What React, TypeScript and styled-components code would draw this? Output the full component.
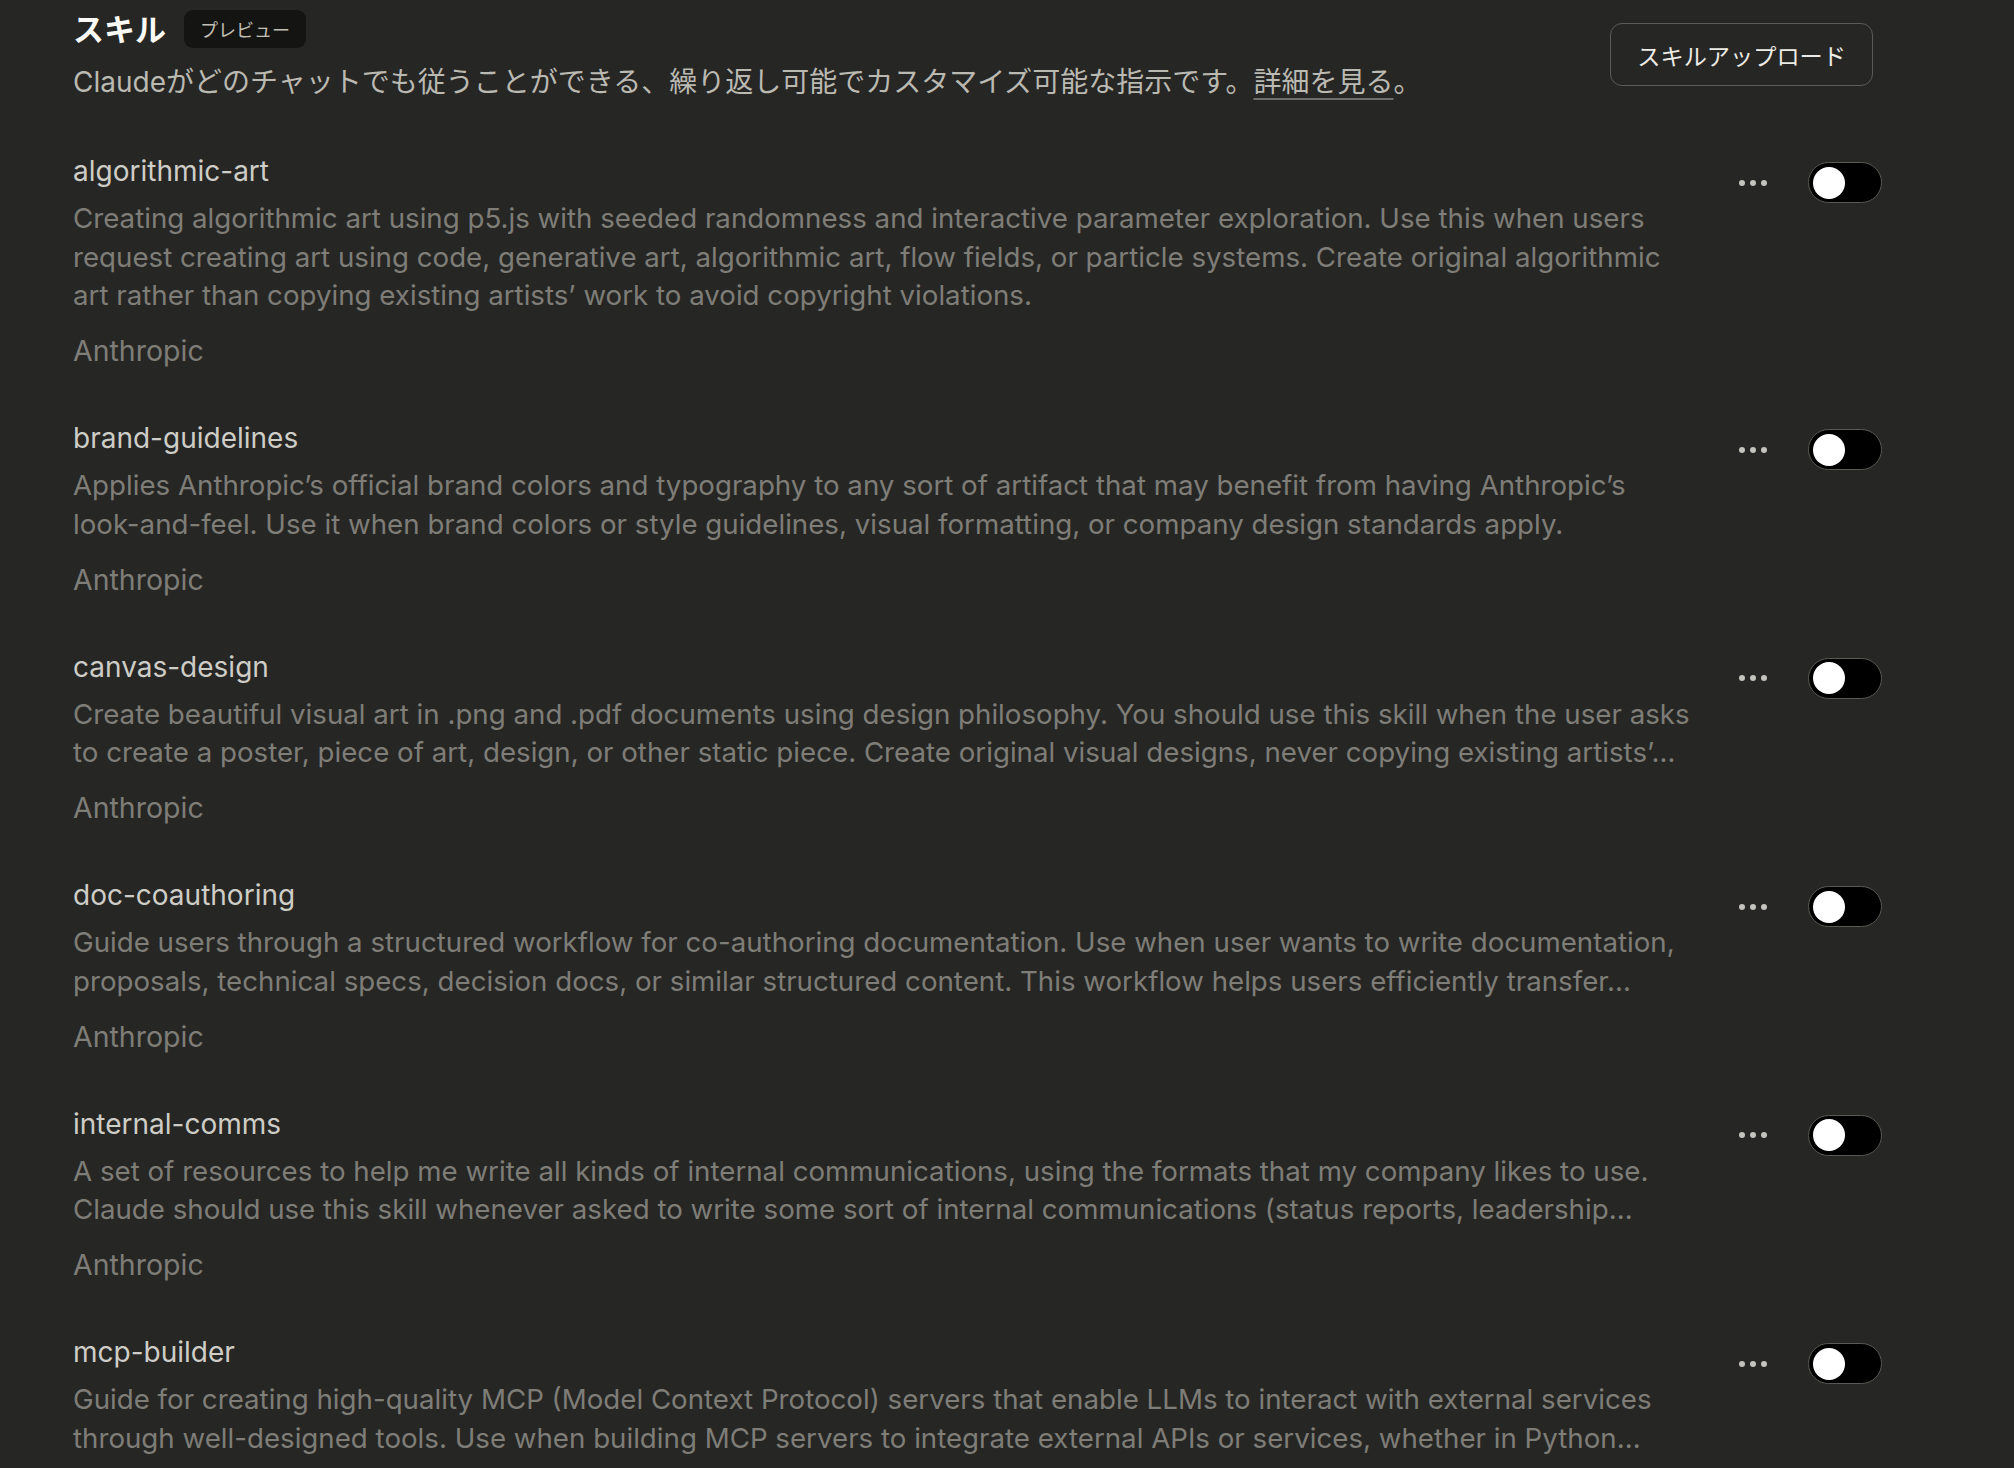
import React from "react";
import styled, { createGlobalStyle } from "styled-components";

const GlobalStyle = createGlobalStyle`
  html, body {
    margin: 0;
    padding: 0;
    background: #262624;
  }
  body {
    font-family: "Inter", "Noto Sans CJK JP", sans-serif;
    color: #c2c0b6;
    -webkit-font-smoothing: antialiased;
  }
  * { box-sizing: border-box; }
`;

const Page = styled.main`
  padding: 0 132px 0 73px;
  min-height: 100vh;
  background: #262624;
`;

const Header = styled.header`
  display: flex;
  justify-content: space-between;
  align-items: flex-start;
`;

const HeaderText = styled.div`
  display: flex;
  flex-direction: column;
`;

const HeadingRow = styled.div`
  display: flex;
  align-items: center;
  gap: 18px;
  height: 40px;
  margin-top: 8px;
`;

const Heading = styled.h1`
  margin: 0;
  font-family: "Noto Sans CJK JP", sans-serif;
  font-size: 31px;
  line-height: 40px;
  font-weight: 700;
  color: #faf9f5;
`;

const Badge = styled.span`
  display: inline-flex;
  align-items: center;
  height: 38px;
  padding: 0 16px;
  margin-top: 2px;
  border-radius: 9px;
  background: #141413;
  font-family: "Noto Sans CJK JP", sans-serif;
  font-size: 18px;
  color: #c2c0b6;
`;

const Subtitle = styled.p`
  margin: 14px 0 0;
  font-family: "Inter", "Noto Sans CJK JP", sans-serif;
  font-size: 28px;
  line-height: 40px;
  color: #bab9b2;
  white-space: nowrap;
`;

const Link = styled.a`
  color: inherit;
  text-decoration: underline;
  text-decoration-color: #6f6e69;
  text-decoration-thickness: 2px;
  text-underline-offset: 6px;
  cursor: pointer;
`;

const UploadButton = styled.button`
  margin-top: 23px;
  margin-right: 9px;
  height: 63px;
  padding: 0 26px;
  border: 1px solid #5c5b57;
  border-radius: 12px;
  background: transparent;
  font-family: "Noto Sans CJK JP", sans-serif;
  font-size: 23.2px;
  color: #ecebe5;
  cursor: pointer;
`;

const List = styled.section`
  display: flex;
  flex-direction: column;
  gap: 49px;
  margin-top: 50px;
`;

const Row = styled.article`
  display: flex;
  align-items: flex-start;
  gap: 40px;
`;

const Content = styled.div`
  flex: 1;
  min-width: 0;
`;

const SkillName = styled.h2`
  margin: 0;
  font-family: "Inter", sans-serif;
  font-size: 28px;
  line-height: 38px;
  font-weight: 400;
  color: #cecdc7;
`;

const Description = styled.div`
  margin-top: 9px;
  font-family: "Inter", sans-serif;
  font-size: 27.7px;
  line-height: 38.5px;
  color: #7e7d78;
`;

const Line = styled.span`
  display: block;
  white-space: nowrap;
`;

const Author = styled.div`
  margin-top: 17.5px;
  font-family: "Inter", sans-serif;
  font-size: 28.5px;
  line-height: 38px;
  color: #7e7d78;
`;

const Controls = styled.div`
  display: flex;
  align-items: center;
  gap: 35px;
  margin-top: 10px;
`;

const MoreButton = styled.button`
  display: flex;
  align-items: center;
  justify-content: center;
  width: 40px;
  height: 41px;
  padding: 0;
  border: none;
  background: transparent;
  color: #c4c3bd;
  cursor: pointer;
`;

const Toggle = styled.button<{ $on: boolean }>`
  display: flex;
  align-items: center;
  justify-content: ${(p) => (p.$on ? "flex-end" : "flex-start")};
  width: 74px;
  height: 41px;
  padding: 0 4px;
  border: 1.5px solid #5a5955;
  border-radius: 999px;
  background: #000;
  cursor: pointer;
`;

const Knob = styled.span`
  width: 32px;
  height: 32px;
  border-radius: 50%;
  background: #fff;
`;

type Skill = { name: string; lines: string[]; author: string };

const skills: Skill[] = [
  {
    name: "algorithmic-art",
    lines: [
      "Creating algorithmic art using p5.js with seeded randomness and interactive parameter exploration. Use this when users",
      "request creating art using code, generative art, algorithmic art, flow fields, or particle systems. Create original algorithmic",
      "art rather than copying existing artists’ work to avoid copyright violations.",
    ],
    author: "Anthropic",
  },
  {
    name: "brand-guidelines",
    lines: [
      "Applies Anthropic’s official brand colors and typography to any sort of artifact that may benefit from having Anthropic’s",
      "look-and-feel. Use it when brand colors or style guidelines, visual formatting, or company design standards apply.",
    ],
    author: "Anthropic",
  },
  {
    name: "canvas-design",
    lines: [
      "Create beautiful visual art in .png and .pdf documents using design philosophy. You should use this skill when the user asks",
      "to create a poster, piece of art, design, or other static piece. Create original visual designs, never copying existing artists’…",
    ],
    author: "Anthropic",
  },
  {
    name: "doc-coauthoring",
    lines: [
      "Guide users through a structured workflow for co-authoring documentation. Use when user wants to write documentation,",
      "proposals, technical specs, decision docs, or similar structured content. This workflow helps users efficiently transfer…",
    ],
    author: "Anthropic",
  },
  {
    name: "internal-comms",
    lines: [
      "A set of resources to help me write all kinds of internal communications, using the formats that my company likes to use.",
      "Claude should use this skill whenever asked to write some sort of internal communications (status reports, leadership…",
    ],
    author: "Anthropic",
  },
  {
    name: "mcp-builder",
    lines: [
      "Guide for creating high-quality MCP (Model Context Protocol) servers that enable LLMs to interact with external services",
      "through well-designed tools. Use when building MCP servers to integrate external APIs or services, whether in Python…",
    ],
    author: "Anthropic",
  },
];

const DotsIcon = () => (
  <svg width="30" height="8" viewBox="0 0 30 8" aria-hidden="true">
    <circle cx="4" cy="4" r="3" fill="currentColor" />
    <circle cx="15" cy="4" r="3" fill="currentColor" />
    <circle cx="26" cy="4" r="3" fill="currentColor" />
  </svg>
);

const SkillRow = ({ skill }: { skill: Skill }) => (
  <Row>
    <Content>
      <SkillName>{skill.name}</SkillName>
      <Description>
        {skill.lines.map((l, i) => (
          <Line key={i}>{l}</Line>
        ))}
      </Description>
      <Author>{skill.author}</Author>
    </Content>
    <Controls>
      <MoreButton aria-label="その他">
        <DotsIcon />
      </MoreButton>
      <Toggle $on={false} role="switch" aria-checked={false}>
        <Knob />
      </Toggle>
    </Controls>
  </Row>
);

export default function App() {
  return (
    <>
      <GlobalStyle />
      <Page>
        <Header>
          <HeaderText>
            <HeadingRow>
              <Heading>スキル</Heading>
              <Badge>プレビュー</Badge>
            </HeadingRow>
            <Subtitle>
              Claudeがどのチャットでも従うことができる、繰り返し可能でカスタマイズ可能な指示です。
              <Link>詳細を見る</Link>。
            </Subtitle>
          </HeaderText>
          <UploadButton>スキルアップロード</UploadButton>
        </Header>
        <List>
          {skills.map((s) => (
            <SkillRow key={s.name} skill={s} />
          ))}
        </List>
      </Page>
    </>
  );
}
